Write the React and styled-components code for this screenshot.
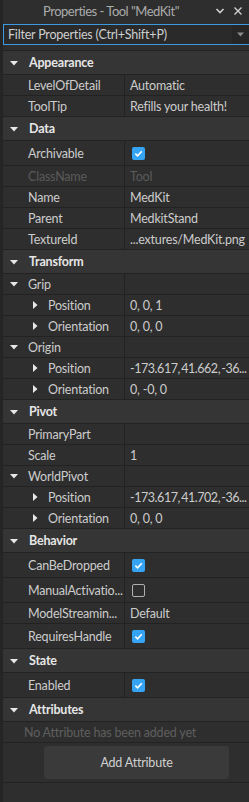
import React from "react";
import styled, { createGlobalStyle } from "styled-components";

const GlobalStyle = createGlobalStyle`
  html, body { margin: 0; padding: 0; background: #2e2e2e; }
  body { font-family: "Source Sans Pro", Lato, "Open Sans", sans-serif; }
  * { box-sizing: border-box; }
`;

const Panel = styled.div`
  width: 249px;
  height: 802px;
  background: #2e2e2e;
  border-left: 3px solid #252525;
  display: flex;
  flex-direction: column;
  overflow: hidden;
  color: #cccccc;
  font-size: 12.5px;
  letter-spacing: -0.2px;
`;

const TitleBar = styled.div`
  height: 22px;
  display: flex;
  align-items: center;
  padding-right: 6px;
  background: #2e2e2e;
`;

const Title = styled.div`
  flex: 1;
  text-align: center;
  color: #ababab;
  font-size: 13px;
  letter-spacing: -0.5px;
  padding-left: 12px;
`;

const TitleIcon = styled.svg`
  width: 10px;
  height: 10px;
  margin-left: 8px;
  flex: none;
`;

const Filter = styled.div`
  margin-top: 2px;
  height: 21px;
  border: 1px solid #3d9ae0;
  border-right: none;
  display: flex;
  align-items: stretch;
  background: #2a2a2a;
`;

const FilterText = styled.div`
  flex: 1;
  padding-left: 4px;
  line-height: 19px;
  color: #cfcfcf;
`;

const FilterDrop = styled.div`
  width: 17px;
  background: #262626;
  display: flex;
  align-items: center;
  justify-content: center;
`;

const Spacer = styled.div`
  height: 6px;
  border-bottom: 1px solid #222222;
`;

const Header = styled.div`
  height: 24px;
  display: flex;
  align-items: center;
  background: #353535;
  border-bottom: 1px solid #222222;
  color: #e6e6e6;
  font-weight: 700;
`;

const Arrow = styled.svg`
  width: 8px;
  height: 8px;
  flex: none;
  margin-left: ${(p) => p.$indent}px;
  margin-right: ${(p) => p.$gap}px;
`;

const Row = styled.div`
  height: ${(p) => (p.$tall ? 25 : 21)}px;
  display: grid;
  grid-template-columns: 122px 1fr;
  border-bottom: 1px solid #222222;
  color: ${(p) => (p.$disabled ? "#5a5a5a" : "#cccccc")};
`;

const NameCell = styled.div`
  display: flex;
  align-items: center;
  padding-left: ${(p) => p.$pad}px;
  border-right: 1px solid #222222;
  white-space: nowrap;
  overflow: hidden;
`;

const ValueCell = styled.div`
  display: flex;
  align-items: center;
  padding-left: 5px;
  white-space: nowrap;
  overflow: hidden;
  letter-spacing: ${(p) => (p.$tight ? "-0.45px" : "-0.2px")};
  word-spacing: ${(p) => (p.$tight ? "-1.5px" : "0")};
`;

const Check = styled.div`
  width: 13px;
  height: 13px;
  margin-left: 2px;
  border-radius: 2px;
  background: ${(p) => (p.$on ? "#35a4f4" : "transparent")};
  border: ${(p) => (p.$on ? "none" : "1px solid #b0b0b0")};
  display: flex;
  align-items: center;
  justify-content: center;
`;

const Empty = styled.div`
  height: 21px;
  display: flex;
  align-items: center;
  padding-left: 21px;
  color: #5e5e5e;
  border-bottom: 1px solid #222222;
`;

const ButtonArea = styled.div`
  height: 40px;
  display: flex;
  align-items: center;
  padding-left: 41px;
  padding-right: 20px;
  border-bottom: 1px solid #222222;
`;

const AddButton = styled.div`
  flex: 1;
  height: 33px;
  background: #3a3a3a;
  border-radius: 3px;
  display: flex;
  align-items: center;
  justify-content: center;
  color: #d0d0d0;
`;

const Down = ({ indent = 7, gap = 11 }) => (
  <Arrow viewBox="0 0 8 8" $indent={indent} $gap={gap}>
    <path d="M0 2 L8 2 L4 6.5 Z" fill="#e8e8e8" />
  </Arrow>
);

const Right = ({ indent = 28, gap = 9 }) => (
  <Arrow viewBox="0 0 8 8" $indent={indent} $gap={gap}>
    <path d="M2 0 L6.5 4 L2 8 Z" fill="#e8e8e8" />
  </Arrow>
);

const CheckBox = ({ on }) => (
  <Check $on={on}>
    {on && (
      <svg width="9" height="9" viewBox="0 0 9 9">
        <path d="M1.3 4.6 L3.6 6.8 L7.8 2.2" stroke="#fff" strokeWidth="1.6" fill="none" />
      </svg>
    )}
  </Check>
);

const Prop = ({ name, value, pad = 25, tall, disabled, check }) => (
  <Row $tall={tall || check !== undefined} $disabled={disabled}>
    <NameCell $pad={pad}>{name}</NameCell>
    <ValueCell>{check !== undefined ? <CheckBox on={check} /> : value}</ValueCell>
  </Row>
);

const Group = ({ name }) => (
  <Row>
    <NameCell $pad={0}>
      <Down gap={10} />
      {name}
    </NameCell>
    <ValueCell />
  </Row>
);

const Sub = ({ name, value, tight }) => (
  <Row>
    <NameCell $pad={0}>
      <Right />
      {name}
    </NameCell>
    <ValueCell $tight={tight}>{value}</ValueCell>
  </Row>
);

const Section = ({ name }) => (
  <Header>
    <Down />
    {name}
  </Header>
);

export default function App() {
  return (
    <>
      <GlobalStyle />
      <Panel>
        <TitleBar>
          <Title>Properties - Tool "MedKit"</Title>
          <TitleIcon viewBox="0 0 10 10">
            <path d="M1.5 3 L5 6.5 L8.5 3" stroke="#d0d0d0" strokeWidth="1.6" fill="none" />
          </TitleIcon>
          <TitleIcon viewBox="0 0 10 10">
            <path d="M1.5 1.5 L8.5 8.5 M8.5 1.5 L1.5 8.5" stroke="#d0d0d0" strokeWidth="1.4" fill="none" />
          </TitleIcon>
        </TitleBar>
        <Filter>
          <FilterText>Filter Properties (Ctrl+Shift+P)</FilterText>
          <FilterDrop>
            <svg width="7" height="5" viewBox="0 0 7 5">
              <path d="M0 0.5 L7 0.5 L3.5 4.5 Z" fill="#8a8a8a" />
            </svg>
          </FilterDrop>
        </Filter>
        <Spacer />
        <Section name="Appearance" />
        <Prop name="LevelOfDetail" value="Automatic" />
        <Prop name="ToolTip" value="Refills your health!" />
        <Section name="Data" />
        <Prop name="Archivable" check={true} />
        <Prop name="ClassName" value="Tool" disabled />
        <Prop name="Name" value="MedKit" />
        <Prop name="Parent" value="MedkitStand" />
        <Prop name="TextureId" value="...extures/MedKit.png" />
        <Section name="Transform" />
        <Group name="Grip" />
        <Sub name="Position" value="0, 0, 1" />
        <Sub name="Orientation" value="0, 0, 0" />
        <Group name="Origin" />
        <Sub name="Position" value="-173.617, 41.662, -36..." tight />
        <Sub name="Orientation" value="0, -0, 0" />
        <Section name="Pivot" />
        <Prop name="PrimaryPart" value="" />
        <Prop name="Scale" value="1" />
        <Group name="WorldPivot" />
        <Sub name="Position" value="-173.617, 41.702, -36..." tight />
        <Sub name="Orientation" value="0, 0, 0" />
        <Section name="Behavior" />
        <Prop name="CanBeDropped" check={true} />
        <Prop name="ManualActivatio..." check={false} />
        <Prop name="ModelStreamin..." value="Default" />
        <Prop name="RequiresHandle" check={true} />
        <Section name="State" />
        <Prop name="Enabled" check={true} />
        <Section name="Attributes" />
        <Empty>No Attribute has been added yet</Empty>
        <ButtonArea>
          <AddButton>Add Attribute</AddButton>
        </ButtonArea>
      </Panel>
    </>
  );
}
